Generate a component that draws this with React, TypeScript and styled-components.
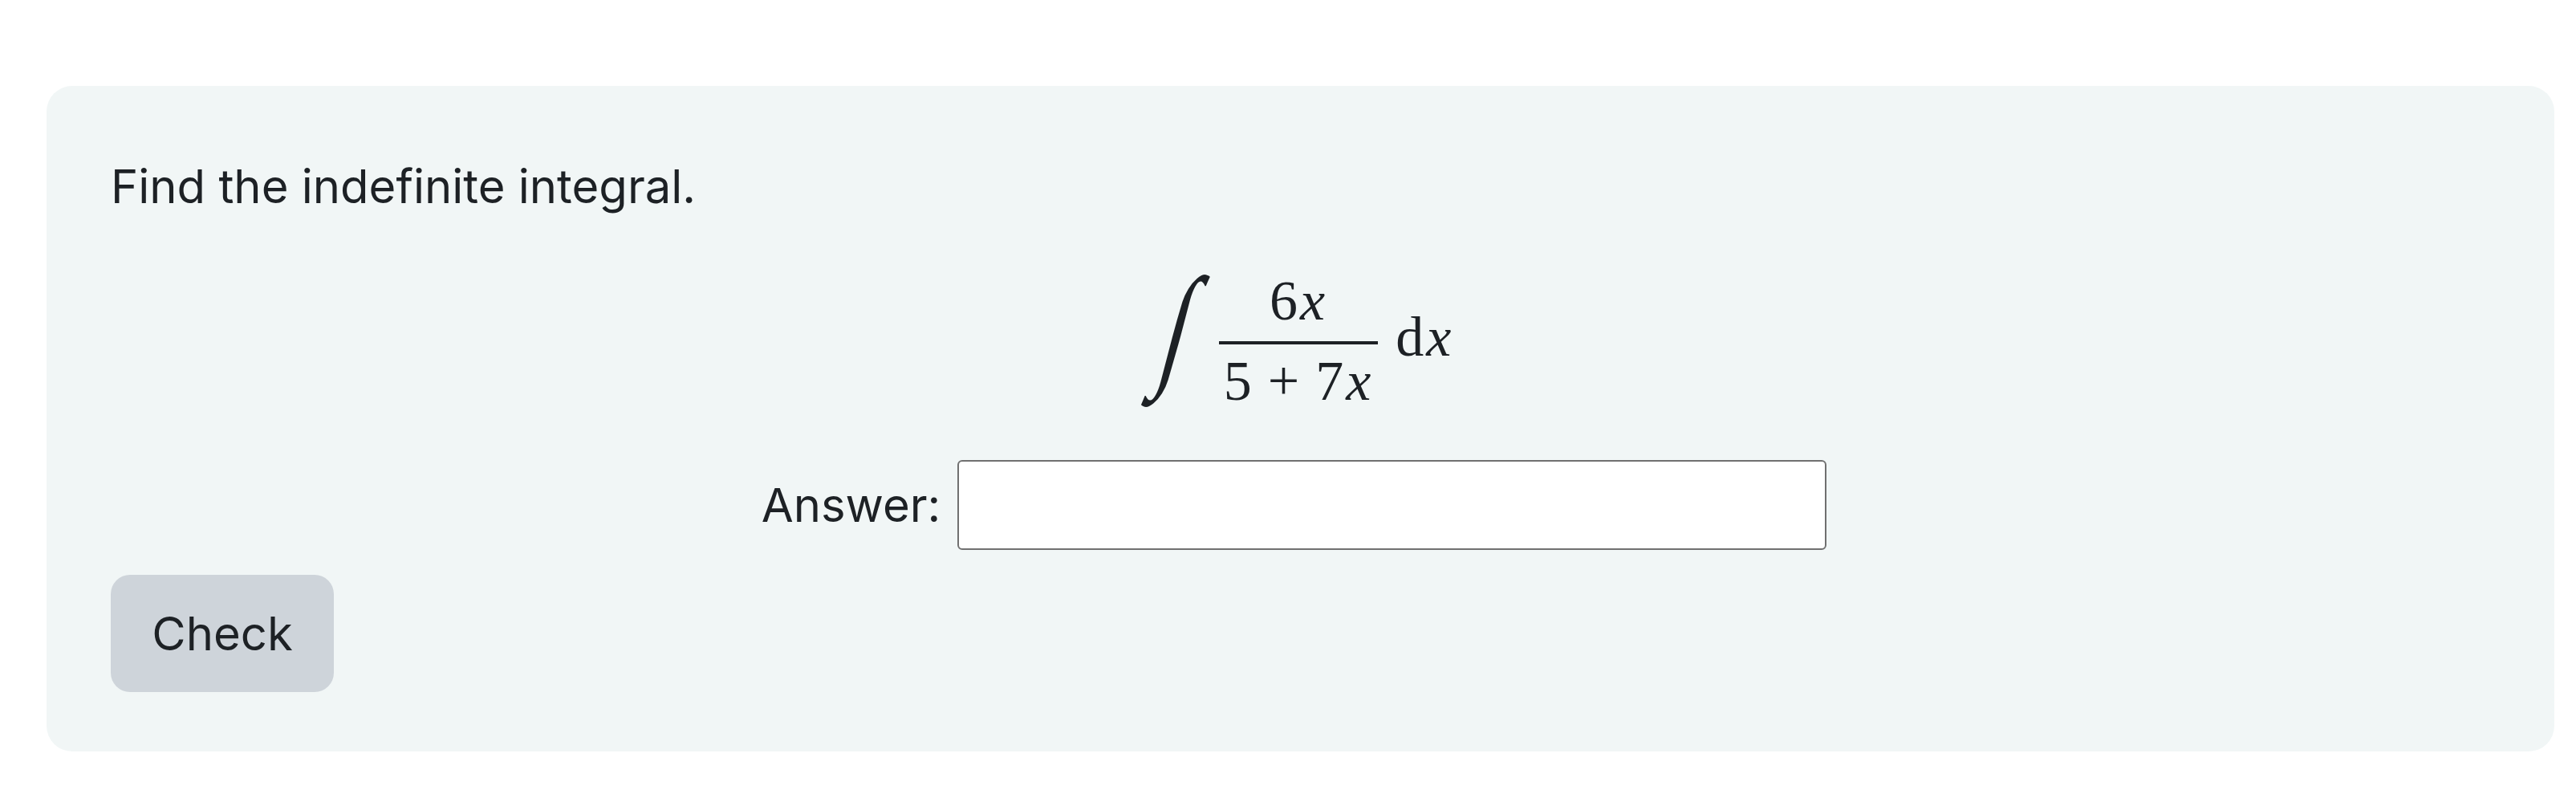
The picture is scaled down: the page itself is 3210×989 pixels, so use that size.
import React from 'react';
import styled, { createGlobalStyle } from 'styled-components';

const GlobalStyle = createGlobalStyle`
  html, body {
    margin: 0;
    padding: 0;
    background: #ffffff;
  }
  body {
    font-family: Inter, "Noto Sans", "Liberation Sans", sans-serif;
    color: #1d2125;
  }
`;

const Card = styled.section`
  margin: 107px 27px 0 58px;
  padding: 82px 80px 74px;
  background: #f1f6f6;
  border-radius: 32px;
`;

const Prompt = styled.p`
  margin: 0;
  font-size: 58px;
  line-height: 87px;
`;

const MathRow = styled.div`
  margin-top: 64px;
  height: 170px;
  display: flex;
  justify-content: center;
  align-items: flex-start;
  font-family: "Liberation Serif", "Times New Roman", serif;
  font-size: 70px;
  line-height: 70px;
  color: #1d2125;
`;

const Integral = styled.span`
  width: 89px;
  height: 170px;
  display: flex;
  align-items: center;
  justify-content: flex-start;
  font-size: 168px;
  line-height: 170px;
  transform: translate(16px, -20px) skewX(-15deg) scaleX(0.68);
  transform-origin: 30% 50%;
`;

const Fraction = styled.span`
  display: flex;
  flex-direction: column;
  align-items: stretch;
`;

const Term = styled.span`
  display: block;
  text-align: center;
  white-space: nowrap;
  padding: 0 6px;
`;

const Bar = styled.span<{ $before: number; $after: number }>`
  display: block;
  height: 4px;
  background: #1d2125;
  margin: ${({ $before, $after }) => `${$before}px 0 ${$after}px`};
`;

const Var = styled.i`
  font-style: italic;
  padding: 0 3px;
`;

const Op = styled.span`
  margin: 0 20px;
`;

const Differential = styled.span`
  margin: 45px 0 0 22px;
  white-space: nowrap;
`;

const AnswerRow = styled.div`
  margin-top: 63px;
  padding-right: 16px;
  display: flex;
  justify-content: center;
  align-items: center;
  gap: 21px;
`;

const Label = styled.label`
  font-size: 58px;
  line-height: 87px;
`;

const AnswerInput = styled.input`
  box-sizing: border-box;
  width: 1083px;
  height: 112px;
  border: 2px solid #707070;
  border-radius: 6px;
  background: #ffffff;
  font: inherit;
  font-size: 50px;
  padding: 0 20px;
  outline: none;
`;

const CheckButton = styled.button`
  margin-top: 31px;
  width: 278px;
  height: 146px;
  border: none;
  border-radius: 24px;
  background: #ced4da;
  color: #1d2125;
  font-family: inherit;
  font-size: 58px;
  line-height: 1;
  cursor: pointer;
`;

export default function App() {
  return (
    <>
      <GlobalStyle />
      <Card>
        <Prompt>Find the indefinite integral.</Prompt>
        <MathRow>
          <Integral>∫</Integral>
          <Fraction>
            <Term>
              6<Var>x</Var>
            </Term>
            <Bar $before={15} $after={11} />
            <Term>
              5<Op>+</Op>7<Var>x</Var>
            </Term>
          </Fraction>
          <Differential>
            d<Var>x</Var>
          </Differential>
        </MathRow>
        <AnswerRow>
          <Label htmlFor="answer">Answer:</Label>
          <AnswerInput id="answer" type="text" />
        </AnswerRow>
        <CheckButton type="button">Check</CheckButton>
      </Card>
    </>
  );
}
